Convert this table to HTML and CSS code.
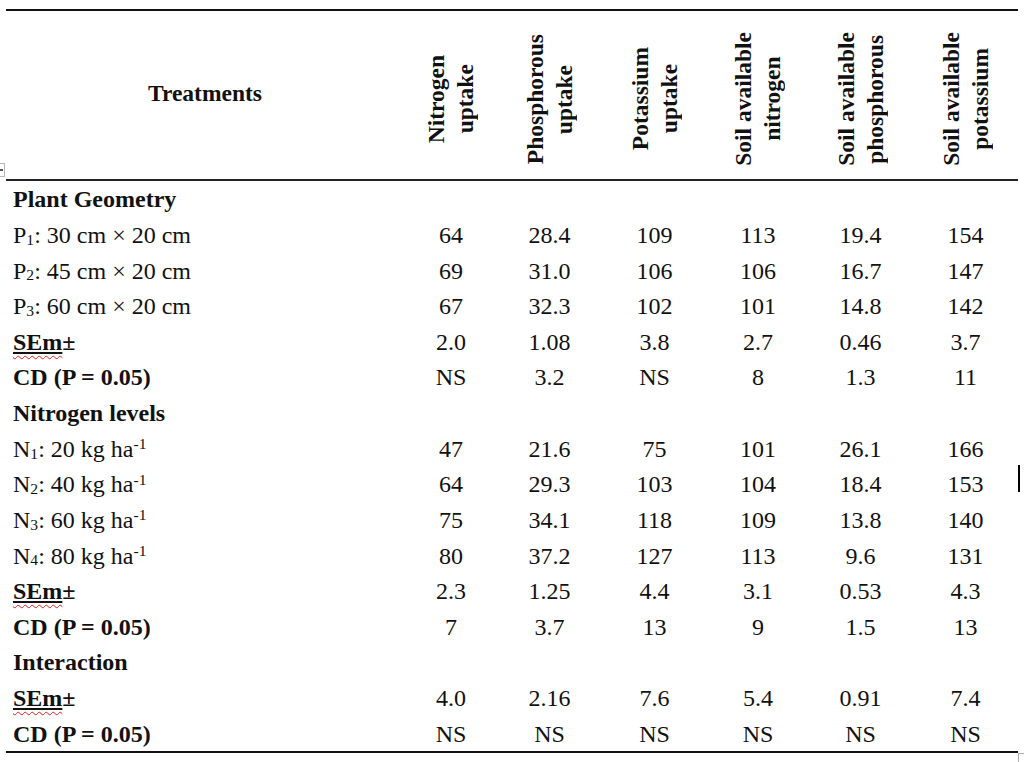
FILE: index.html
```html
<!DOCTYPE html>
<html lang="en">
<head>
<meta charset="utf-8">
<title>Table</title>
<link rel="stylesheet" href="styles.css">
</head>
<body>
<div class="page">
  <table class="data">
    <colgroup>
      <col class="c-label">
      <col class="c1"><col class="c2"><col class="c3"><col class="c4"><col class="c5"><col class="c6">
    </colgroup>
    <thead>
      <tr class="head">
        <th class="th-label">Treatments</th>
        <th class="th-vert"><div class="vert">Nitrogen<br>uptake</div></th>
        <th class="th-vert"><div class="vert">Phosphorous<br>uptake</div></th>
        <th class="th-vert"><div class="vert">Potassium<br>uptake</div></th>
        <th class="th-vert"><div class="vert">Soil available<br>nitrogen</div></th>
        <th class="th-vert"><div class="vert">Soil available<br>phosphorous</div></th>
        <th class="th-vert"><div class="vert">Soil available<br>potassium</div></th>
      </tr>
    </thead>
    <tbody>
      <tr class="first"><td class="lbl b">Plant Geometry</td><td></td><td></td><td></td><td></td><td></td><td></td></tr>
      <tr><td class="lbl">P<sub>1</sub>: 30 cm × 20 cm</td><td>64</td><td>28.4</td><td>109</td><td>113</td><td>19.4</td><td>154</td></tr>
      <tr><td class="lbl">P<sub>2</sub>: 45 cm × 20 cm</td><td>69</td><td>31.0</td><td>106</td><td>106</td><td>16.7</td><td>147</td></tr>
      <tr><td class="lbl">P<sub>3</sub>: 60 cm × 20 cm</td><td>67</td><td>32.3</td><td>102</td><td>101</td><td>14.8</td><td>142</td></tr>
      <tr><td class="lbl b"><span class="spell"><span class="ul">SEm</span></span>±</td><td>2.0</td><td>1.08</td><td>3.8</td><td>2.7</td><td>0.46</td><td>3.7</td></tr>
      <tr><td class="lbl b">CD (P = 0.05)</td><td>NS</td><td>3.2</td><td>NS</td><td>8</td><td>1.3</td><td>11</td></tr>
      <tr><td class="lbl b">Nitrogen levels</td><td></td><td></td><td></td><td></td><td></td><td></td></tr>
      <tr><td class="lbl">N<sub>1</sub>: 20 kg ha<sup>-1</sup></td><td>47</td><td>21.6</td><td>75</td><td>101</td><td>26.1</td><td>166</td></tr>
      <tr><td class="lbl">N<sub>2</sub>: 40 kg ha<sup>-1</sup></td><td>64</td><td>29.3</td><td>103</td><td>104</td><td>18.4</td><td>153</td></tr>
      <tr><td class="lbl">N<sub>3</sub>: 60 kg ha<sup>-1</sup></td><td>75</td><td>34.1</td><td>118</td><td>109</td><td>13.8</td><td>140</td></tr>
      <tr><td class="lbl">N<sub>4</sub>: 80 kg ha<sup>-1</sup></td><td>80</td><td>37.2</td><td>127</td><td>113</td><td>9.6</td><td>131</td></tr>
      <tr><td class="lbl b"><span class="spell"><span class="ul">SEm</span></span>±</td><td>2.3</td><td>1.25</td><td>4.4</td><td>3.1</td><td>0.53</td><td>4.3</td></tr>
      <tr><td class="lbl b">CD (P = 0.05)</td><td>7</td><td>3.7</td><td>13</td><td>9</td><td>1.5</td><td>13</td></tr>
      <tr><td class="lbl b">Interaction</td><td></td><td></td><td></td><td></td><td></td><td></td></tr>
      <tr><td class="lbl b"><span class="spell"><span class="ul">SEm</span></span>±</td><td>4.0</td><td>2.16</td><td>7.6</td><td>5.4</td><td>0.91</td><td>7.4</td></tr>
      <tr class="last"><td class="lbl b">CD (P = 0.05)</td><td>NS</td><td>NS</td><td>NS</td><td>NS</td><td>NS</td><td>NS</td></tr>
    </tbody>
  </table>
  <div class="move-handle"><span class="handle-mark"></span></div>
  <div class="cursor-bar"></div>
  <div class="corner-mark"></div>
</div>
</body>
</html>
```

FILE: styles.css
```css
html, body {
  margin: 0;
  padding: 0;
  background: #ffffff;
}

.page {
  position: relative;
  width: 1024px;
  height: 762px;
  padding: 9px 0 0 6px;
  box-sizing: border-box;
  font-family: "Liberation Serif", "Times New Roman", serif;
  color: #111;
  overflow: hidden;
}

.data {
  border-collapse: collapse;
  table-layout: fixed;
  width: 1012px;
  font-size: 24px;
}

.c-label { width: 398px; }
.c1 { width: 94px; }
.c2 { width: 103px; }
.c3 { width: 107px; }
.c4 { width: 100px; }
.c5 { width: 105px; }
.c6 { width: 105px; }

.head th {
  padding: 0;
  border-top: 2px solid #111;
  border-bottom: 2px solid #222;
  vertical-align: middle;
  text-align: center;
  font-weight: bold;
  font-size: 23.5px;
}

.head .th-label {
  height: 160px;
  padding: 0 0 4px 0;
}

.head .th-vert {
  height: 160px;
  padding: 8px 0 0 0;
}

.vert {
  display: inline-block;
  vertical-align: middle;
  writing-mode: vertical-rl;
  transform: rotate(180deg);
  white-space: nowrap;
  text-align: center;
  line-height: 29px;
}

tbody td {
  height: 33.625px;
  padding: 2px 0 0 0;
  text-align: center;
  vertical-align: middle;
  white-space: nowrap;
}

tbody .lbl {
  text-align: left;
  padding-left: 7px;
}

.b { font-weight: bold; }

sub, sup {
  font-size: 65%;
  line-height: 0;
  position: relative;
  vertical-align: baseline;
}
sub { bottom: -0.12em; }
sup { top: -0.5em; }

.spell {
  text-decoration: underline wavy #e02020;
  text-decoration-thickness: 1px;
  text-underline-offset: 5px;
}

.ul {
  text-decoration: underline solid #111;
  text-decoration-thickness: 1.5px;
  text-underline-offset: 2px;
}

.last td {
  border-bottom: 2px solid #111;
}

.move-handle {
  position: absolute;
  left: -1px;
  top: 163px;
  width: 6px;
  height: 14px;
  border: 1px solid #b8b8b8;
  background: #fff;
  box-sizing: border-box;
}

.handle-mark {
  position: absolute;
  left: 0;
  top: 5px;
  width: 3px;
  height: 2px;
  background: #555;
}

.cursor-bar {
  position: absolute;
  left: 1018px;
  top: 465px;
  width: 2px;
  height: 27px;
  background: #000;
}

.corner-mark {
  position: absolute;
  left: 1018px;
  top: 753px;
  width: 8px;
  height: 12px;
  border-left: 1px solid #b0b0b0;
  border-top: 1px solid #b0b0b0;
}
```
